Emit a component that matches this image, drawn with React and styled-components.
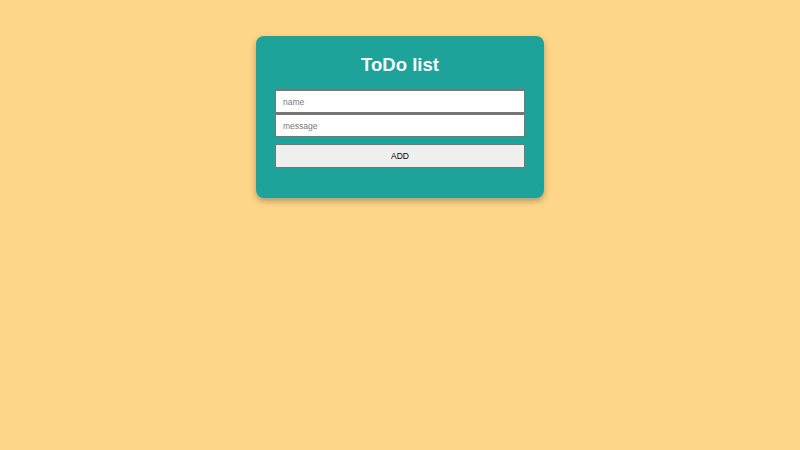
import React from "react";
import styled, { createGlobalStyle } from "styled-components";

const Global = createGlobalStyle`
  html, body { margin: 0; padding: 0; background: #fed689; }
  body { font-family: "Liberation Sans", Arial, sans-serif; }
`;

const Page = styled.div`
  display: flex;
  justify-content: center;
  padding-top: 36px;
  height: 450px;
  box-sizing: border-box;
`;

const Card = styled.div`
  width: 288px;
  height: 162px;
  box-sizing: border-box;
  background: #1ea39b;
  border-radius: 8px;
  box-shadow: 0 3px 6px rgba(0, 0, 0, 0.3);
  padding: 0 19px;
  display: flex;
  flex-direction: column;
`;

const Title = styled.h2`
  margin: 17px 0 13px;
  font-size: 18.5px;
  line-height: 23px;
  font-weight: bold;
  text-align: center;
  color: #f8f8f8;
`;

const Input = styled.input`
  width: 250px;
  height: 24px;
  box-sizing: border-box;
  border: 1px solid #777;
  border-top-width: 2px;
  background: #fff;
  padding: 0 7px;
  font-family: "Liberation Sans", Arial, sans-serif;
  font-size: 8.5px;
  outline: none;
  &::placeholder { color: #7a7a7a; }
`;

const Button = styled.button`
  margin-top: 7px;
  width: 250px;
  height: 24px;
  box-sizing: border-box;
  border: 1px solid #767676;
  background: #efefef;
  font-family: "Liberation Sans", Arial, sans-serif;
  font-size: 8.5px;
  color: #000;
`;

export default function App() {
  return (
    <>
      <Global />
      <Page>
        <Card>
          <Title>ToDo list</Title>
          <Input placeholder="name" />
          <Input placeholder="message" />
          <Button>ADD</Button>
        </Card>
      </Page>
    </>
  );
}
